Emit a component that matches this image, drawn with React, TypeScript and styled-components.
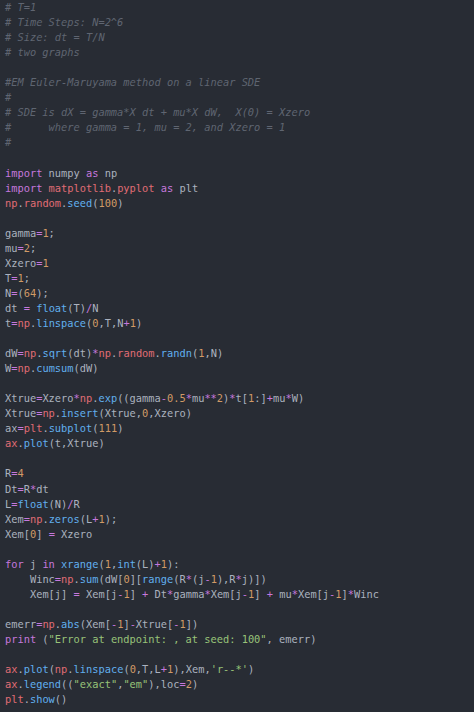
import React from "react";
import styled, { createGlobalStyle } from "styled-components";

const GlobalStyle = createGlobalStyle`
  html, body {
    margin: 0;
    padding: 0;
    background: #282c34;
  }
`;

const Editor = styled.pre`
  margin: 0;
  padding: 0 0 0 5px;
  min-height: 712px;
  box-sizing: border-box;
  background: #282c34;
  color: #abb2bf;
  font-family: "DejaVu Sans Mono", "Liberation Mono", monospace;
  font-size: 10.35px;
  line-height: 15.05px;
  white-space: pre;
  overflow: hidden;
`;

const Line = styled.div`
  height: 15.05px;
`;

type Kind = "plain" | "comment" | "keyword" | "string" | "number" | "func" | "module" | "op";

const colors: Record<Kind, string> = {
  plain: "#abb2bf",
  comment: "#5f6571",
  keyword: "#c678dd",
  string: "#98c379",
  number: "#d19a66",
  func: "#61afef",
  module: "#e06c75",
  op: "#c678dd",
};

const Token = styled.span<{ $kind: Kind }>`
  color: ${(p) => colors[p.$kind]};
  font-style: ${(p) => (p.$kind === "comment" ? "italic" : "normal")};
`;

const source = `# T=1
# Time Steps: N=2^6
# Size: dt = T/N
# two graphs

#EM Euler-Maruyama method on a linear SDE
#
# SDE is dX = gamma*X dt + mu*X dW,  X(0) = Xzero
#      where gamma = 1, mu = 2, and Xzero = 1
#

import numpy as np
import matplotlib.pyplot as plt
np.random.seed(100)

gamma=1;
mu=2;
Xzero=1
T=1;
N=(64);
dt = float(T)/N
t=np.linspace(0,T,N+1)

dW=np.sqrt(dt)*np.random.randn(1,N)
W=np.cumsum(dW)

Xtrue=Xzero*np.exp((gamma-0.5*mu**2)*t[1:]+mu*W)
Xtrue=np.insert(Xtrue,0,Xzero)
ax=plt.subplot(111)
ax.plot(t,Xtrue)

R=4
Dt=R*dt
L=float(N)/R
Xem=np.zeros(L+1);
Xem[0] = Xzero

for j in xrange(1,int(L)+1):
    Winc=np.sum(dW[0][range(R*(j-1),R*j)])
    Xem[j] = Xem[j-1] + Dt*gamma*Xem[j-1] + mu*Xem[j-1]*Winc

emerr=np.abs(Xem[-1]-Xtrue[-1])
print ("Error at endpoint: , at seed: 100", emerr)

ax.plot(np.linspace(0,T,L+1),Xem,'r--*')
ax.legend(("exact","em"),loc=2)
plt.show()`;

const KEYWORDS = new Set(["import", "as", "for", "in", "print"]);

type Tok = { text: string; kind: Kind };

function tokenize(line: string): Tok[] {
  const out: Tok[] = [];
  let i = 0;
  while (i < line.length) {
    const c = line[i];
    if (c === "#") {
      out.push({ text: line.slice(i), kind: "comment" });
      break;
    }
    if (c === '"' || c === "'") {
      let j = i + 1;
      while (j < line.length && line[j] !== c) j++;
      out.push({ text: line.slice(i, j + 1), kind: "string" });
      i = j + 1;
      continue;
    }
    if (/[0-9]/.test(c)) {
      let j = i;
      while (j < line.length && /[0-9.]/.test(line[j])) j++;
      out.push({ text: line.slice(i, j), kind: "number" });
      i = j;
      continue;
    }
    if (/[A-Za-z_]/.test(c)) {
      let j = i;
      while (j < line.length && /[A-Za-z_0-9]/.test(line[j])) j++;
      const word = line.slice(i, j);
      let k = j;
      while (k < line.length && line[k] === " ") k++;
      let kind: Kind = "plain";
      if (KEYWORDS.has(word)) kind = "keyword";
      else if (line[j] === ".") kind = "module";
      else if (line[k] === "(") kind = "func";
      else if (i > 0 && line[i - 1] === ".") kind = "module";
      out.push({ text: word, kind });
      i = j;
      continue;
    }
    if (/[=+\-*\/]/.test(c)) {
      let j = i;
      while (j < line.length && /[=+\-*\/]/.test(line[j])) j++;
      out.push({ text: line.slice(i, j), kind: "op" });
      i = j;
      continue;
    }
    let j = i;
    while (j < line.length && !/[#"'0-9A-Za-z_=+\-*\/]/.test(line[j])) j++;
    out.push({ text: line.slice(i, j), kind: "plain" });
    i = j;
  }
  return out;
}

export default function App() {
  const lines = source.split("\n");
  return (
    <>
      <GlobalStyle />
      <Editor>
        {lines.map((line, li) => (
          <Line key={li}>
            {line.length === 0
              ? " "
              : tokenize(line).map((t, ti) => (
                  <Token key={ti} $kind={t.kind}>
                    {t.text}
                  </Token>
                ))}
          </Line>
        ))}
      </Editor>
    </>
  );
}
